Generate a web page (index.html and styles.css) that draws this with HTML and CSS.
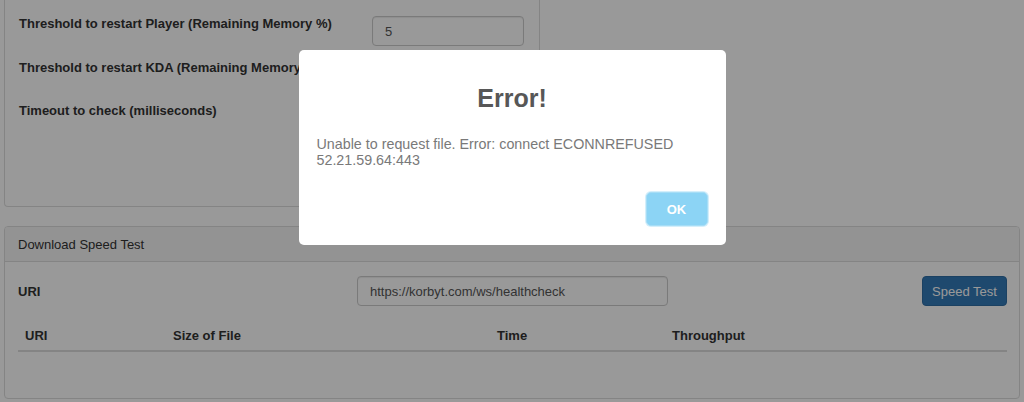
FILE: index.html
```html
<!DOCTYPE html>
<html lang="en">
<head>
<meta charset="utf-8">
<title>Settings</title>
<link rel="stylesheet" href="styles.css">
</head>
<body>
<div class="page">
  <section class="panel panel-top">
    <div class="form-row">
      <label class="form-label">Threshold to restart Player (Remaining Memory %)</label>
      <input class="form-input" type="text" value="5">
    </div>
    <div class="form-row">
      <label class="form-label">Threshold to restart KDA (Remaining Memory %)</label>
      <input class="form-input" type="text" value="5">
    </div>
    <div class="form-row">
      <label class="form-label">Timeout to check (milliseconds)</label>
      <input class="form-input" type="text" value="60000">
    </div>
  </section>

  <section class="panel panel-speed">
    <div class="panel-heading">Download Speed Test</div>
    <div class="panel-body">
      <div class="uri-row">
        <label class="form-label uri-label">URI</label>
        <input class="form-input uri-input" type="text" value="https://korbyt.com/ws/healthcheck">
        <button class="btn-primary" type="button">Speed Test</button>
      </div>
      <table class="results">
        <thead>
          <tr>
            <th class="c-uri">URI</th>
            <th class="c-size">Size of File</th>
            <th class="c-time">Time</th>
            <th class="c-tp">Throughput</th>
          </tr>
        </thead>
        <tbody></tbody>
      </table>
    </div>
  </section>
</div>

<div class="overlay"></div>
<div class="alert-modal" role="dialog">
  <h2 class="alert-title">Error!</h2>
  <p class="alert-text">Unable to request file. Error: connect ECONNREFUSED 52.21.59.64:443</p>
  <div class="alert-actions">
    <button class="alert-ok" type="button">OK</button>
  </div>
</div>
</body>
</html>
```

FILE: styles.css
```css
* { box-sizing: border-box; }

html, body {
  margin: 0;
  padding: 0;
  background: #ffffff;
  font-family: "Liberation Sans", Arial, sans-serif;
  font-size: 13px;
  color: #333333;
  height: 100%;
  overflow: hidden;
}

.page {
  padding: 0 4px;
}

.panel {
  background: #ffffff;
  border: 1px solid #dddddd;
  border-radius: 4px;
}

.panel-top {
  width: 536px;
  border-top: none;
  border-radius: 0 0 4px 4px;
  height: 207px;
  padding: 16px 15px 0 14px;
}

.form-row {
  display: flex;
  align-items: flex-start;
  height: 43.5px;
}

.form-label {
  font-weight: bold;
  font-size: 13px;
  width: 354px;
  padding-top: 0;
  color: #333333;
}

.form-input {
  font-family: "Liberation Sans", Arial, sans-serif;
  font-size: 13px;
  color: #555555;
  height: 30px;
  border: 1px solid #cccccc;
  border-radius: 4px;
  padding: 0 12px;
  background: #ffffff;
  box-shadow: inset 0 1px 1px rgba(0,0,0,0.075);
}

.panel-top .form-input {
  width: 152px;
}

.panel-speed {
  margin-top: 19px;
  width: 1016px;
  height: 173px;
}

.panel-heading {
  height: 35px;
  padding: 0 13px;
  display: flex;
  align-items: center;
  background: #f5f5f5;
  border-bottom: 1px solid #dddddd;
  border-radius: 3px 3px 0 0;
  font-size: 13px;
  color: #333333;
}

.panel-body {
  padding: 14px 12px 0 13px;
}

.uri-row {
  display: grid;
  grid-template-columns: 339px 311px 1fr;
  align-items: center;
}

.uri-label {
  width: auto;
  padding-top: 0;
}

.uri-input {
  width: 311px;
}

.btn-primary {
  justify-self: end;
  height: 30px;
  width: 85px;
  border: 1px solid #2e6da4;
  border-radius: 4px;
  background: #337ab7;
  color: #ffffff;
  font-family: "Liberation Sans", Arial, sans-serif;
  font-size: 13px;
  padding: 0;
}

.results {
  width: 989px;
  margin-top: 18px;
  border-collapse: collapse;
}

.results th {
  text-align: left;
  font-size: 13px;
  font-weight: bold;
  color: #333333;
  padding: 2px 7px 6px;
  border-bottom: 2px solid #dddddd;
  height: 27px;
}

.c-uri { width: 148px; }
.c-size { width: 324px; }
.c-time { width: 175px; }

.overlay {
  position: fixed;
  inset: 0;
  background: rgba(0, 0, 0, 0.4);
}

.alert-modal {
  position: fixed;
  top: 50px;
  left: 50%;
  width: 427px;
  height: 195px;
  margin-left: -213.5px;
  background: #ffffff;
  border-radius: 5px;
  padding: 0 18px;
}

.alert-title {
  margin: 34px 0 0;
  text-align: center;
  font-size: 25px;
  font-weight: bold;
  line-height: 28px;
  color: #575757;
}

.alert-text {
  margin: 24px 0 0;
  font-size: 14.3px;
  line-height: 16px;
  color: #797979;
}

.alert-actions {
  display: flex;
  justify-content: flex-end;
  margin-top: 24px;
  padding-right: 0;
}

.alert-ok {
  width: 62px;
  height: 34px;
  border: 1px solid #a6ddf6;
  border-radius: 5px;
  background: #8cd4f5;
  box-shadow: 0 0 0 1px #d4effb;
  color: #ffffff;
  font-family: "Liberation Sans", Arial, sans-serif;
  font-weight: bold;
  font-size: 13px;
  padding: 0;
}
```
